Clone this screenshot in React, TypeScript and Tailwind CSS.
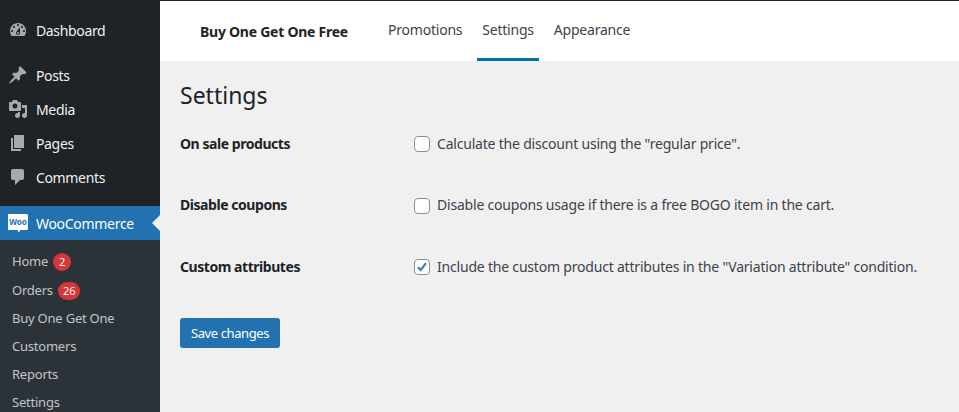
import { ReactNode } from "react";

const font = "font-['Noto_Sans','Open_Sans',sans-serif]";

const icons: Record<string, string> = {
    dashboard: "M3.76 16h12.48c1.1-1.37 1.76-3.11 1.76-5 0-4.42-3.58-8-8-8s-8 3.58-8 8c0 1.89.66 3.63 1.76 5zM10 4c.55 0 1 .45 1 1s-.45 1-1 1-1-.45-1-1 .45-1 1-1zM6 6c.55 0 1 .45 1 1s-.45 1-1 1-1-.45-1-1 .45-1 1-1zm8 0c.55 0 1 .45 1 1s-.45 1-1 1-1-.45-1-1 .45-1 1-1zm-5.37 5.55L12 7v6c0 1.1-.9 2-2 2s-2-.9-2-2c0-.57.24-1.08.63-1.45zM4 10c.55 0 1 .45 1 1s-.45 1-1 1-1-.45-1-1 .45-1 1-1zm12 0c.55 0 1 .45 1 1s-.45 1-1 1-1-.45-1-1 .45-1 1-1zm-5 3c0-.55-.45-1-1-1s-1 .45-1 1 .45 1 1 1 1-.45 1-1z",
    posts: "M10.44 3.02l1.82-1.82 6.36 6.35-1.83 1.82c-1.05-.68-2.48-.57-3.41.36l-.75.75c-.92.93-1.04 2.35-.35 3.41l-1.83 1.82-2.41-2.41-2.8 2.79c-.42.42-3.38 2.71-3.8 2.29s1.86-3.39 2.28-3.81l2.79-2.79L4.1 9.36l1.83-1.82c1.05.69 2.48.57 3.4-.36l.75-.75c.93-.92 1.05-2.35.36-3.41z",
    media: "M13 11V4c0-.55-.45-1-1-1h-1.67L9 1H5L3.67 3H2c-.55 0-1 .45-1 1v7c0 .55.45 1 1 1h10c.55 0 1-.45 1-1zM7 4.5c1.38 0 2.5 1.12 2.5 2.5S8.38 9.5 7 9.5 4.5 8.38 4.5 7 5.62 4.5 7 4.5zM14 6h5v10.5c0 1.38-1.12 2.5-2.5 2.5S14 17.88 14 16.5s1.12-2.5 2.5-2.5c.17 0 .34.02.5.05V9h-3V6zm-4 8.05V13h2v3.5c0 1.38-1.12 2.5-2.5 2.5S7 17.88 7 16.5 8.12 14 9.5 14c.17 0 .34.02.5.05z",
    pages: "M6 15V2h10v13H6zm-1 1h8v2H3V5h2v11z",
    comments: "M5 2h9c1.1 0 2 .9 2 2v7c0 1.1-.9 2-2 2h-2l-5 5v-5H5c-1.1 0-2-.9-2-2V4c0-1.1.9-2 2-2z",
};

function MenuItem(props: { icon: string; label: string }) {
    return <div className="flex h-[34px] items-center">
        <svg viewBox="0 0 20 20" className="ml-[8px] h-5 w-5 fill-[#a7aaad]" fillRule="evenodd">
            <path d={icons[props.icon]} />
        </svg>
        <span className="ml-[8px] text-[14px] tracking-[-0.35px] text-[#f0f0f1]">{props.label}</span>
    </div>
}

function SubItem(props: { label: string; badge?: string; tall?: boolean }) {
    return <div className={`flex items-center pl-[12px] text-[13px] tracking-[-0.22px] text-[#c3c4c7] ${props.tall ? "h-[30px]" : "h-[28px]"}`}>
        {props.label}
        {props.badge ? <span className="ml-[5px] flex h-[18px] min-w-[18px] items-center justify-center rounded-full bg-[#d63638] px-[5px] text-[11px] tracking-normal text-white">{props.badge}</span> : null}
    </div>
}

function Sidebar() {
    return <div className="w-[160px] shrink-0 overflow-hidden bg-[#1d2327]">
        <div className="pt-[12px]">
            <MenuItem icon="dashboard" label="Dashboard" />
        </div>
        <div className="mt-[11px]">
            <MenuItem icon="posts" label="Posts" />
            <MenuItem icon="media" label="Media" />
            <MenuItem icon="pages" label="Pages" />
            <MenuItem icon="comments" label="Comments" />
        </div>
        <div className="relative mt-[12px] flex h-[34px] items-center bg-[#2271b1]">
            <svg viewBox="0 0 20 20" className="ml-[8px] h-5 w-5">
                <path d="M1.500 1h17a1.500 1.500 0 0 1 1.500 1.500v13a1.500 1.500 0 0 1-1.500 1.500h-6l-2 2.500-1-2.500h-8.500a1.500 1.500 0 0 1-1.500-1.500v-13a1.500 1.500 0 0 1 1.500-1.500z" fill="#fff" />
                <text x="10" y="11.500" textAnchor="middle" fontSize="8" fontWeight="700" fill="#2271b1">Woo</text>
            </svg>
            <span className="ml-[8px] text-[14px] tracking-[-0.3px] text-white">WooCommerce</span>
            <div className="absolute right-0 top-[9px] h-0 w-0 border-y-[8px] border-r-[8px] border-y-transparent border-r-[#f0f0f1]"></div>
        </div>
        <div className="bg-[#2c3338] pt-[7px]">
            <SubItem label="Home" badge="2" tall />
            <SubItem label="Orders" badge="26" />
            <SubItem label="Buy One Get One" />
            <SubItem label="Customers" />
            <SubItem label="Reports" />
            <SubItem label="Settings" />
        </div>
    </div>
}

function Tab(props: { label: string; active?: boolean }) {
    return <div className={`flex h-[60px] items-center border-b-[3px] px-[5px] text-[14px] tracking-[-0.22px] text-[#3c434a] ${props.active ? "border-[#0073aa]" : "border-transparent"}`}>
        {props.label}
    </div>
}

function Row(props: { label: string; children: ReactNode; checked?: boolean }) {
    return <div className="flex h-5 items-center">
        <div className="w-[234px] pb-[2px] text-[14px] font-bold tracking-[-0.45px] text-[#1d2327]">{props.label}</div>
        <div className="flex h-4 w-4 items-center justify-center rounded-[4px] border border-[#8c8f94] bg-white">
            {props.checked ? <svg viewBox="0 0 16 16" className="h-4 w-4 fill-none stroke-[#3582c4] stroke-[2.6]">
                <path d="M3.500 8.200l3 3.300L12.500 3.500" />
            </svg> : null}
        </div>
        <div className="ml-[7px] pb-[2px] text-[14px] tracking-[-0.2px] text-[#3c434a]">{props.children}</div>
    </div>
}

export default function App() {
    return <div className={`flex h-[412px] w-[959px] overflow-hidden border-t border-[#1d2327] bg-[#f0f0f1] ${font}`}>
        <Sidebar />
        <div className="flex min-w-0 flex-1 flex-col">
            <div className="flex h-[60px] items-center bg-white pl-[40px]">
                <div className="w-[183px] text-[14px] font-bold tracking-[-0.25px] text-[#1d2327]">Buy One Get One Free</div>
                <Tab label="Promotions" />
                <div className="w-[10px]"></div>
                <Tab label="Settings" active />
                <div className="w-[10px]"></div>
                <Tab label="Appearance" />
            </div>
            <div className="flex flex-col px-[20px]">
                <h1 className="mt-[18px] text-[23px] leading-[32px] text-[#1d2327]">Settings</h1>
                <div className="mt-[23px] flex flex-col gap-[41.5px]">
                    <Row label="On sale products">Calculate the discount using the "regular price".</Row>
                    <Row label="Disable coupons">Disable coupons usage if there is a free BOGO item in the cart.</Row>
                    <Row label="Custom attributes" checked>Include the custom product attributes in the "Variation attribute" condition.</Row>
                </div>
                <button className="mt-[41px] h-[30px] w-[100px] rounded-[3px] bg-[#2271b1] pt-[1px] text-[13px] tracking-[-0.4px] text-white">Save changes</button>
            </div>
        </div>
    </div>
}
